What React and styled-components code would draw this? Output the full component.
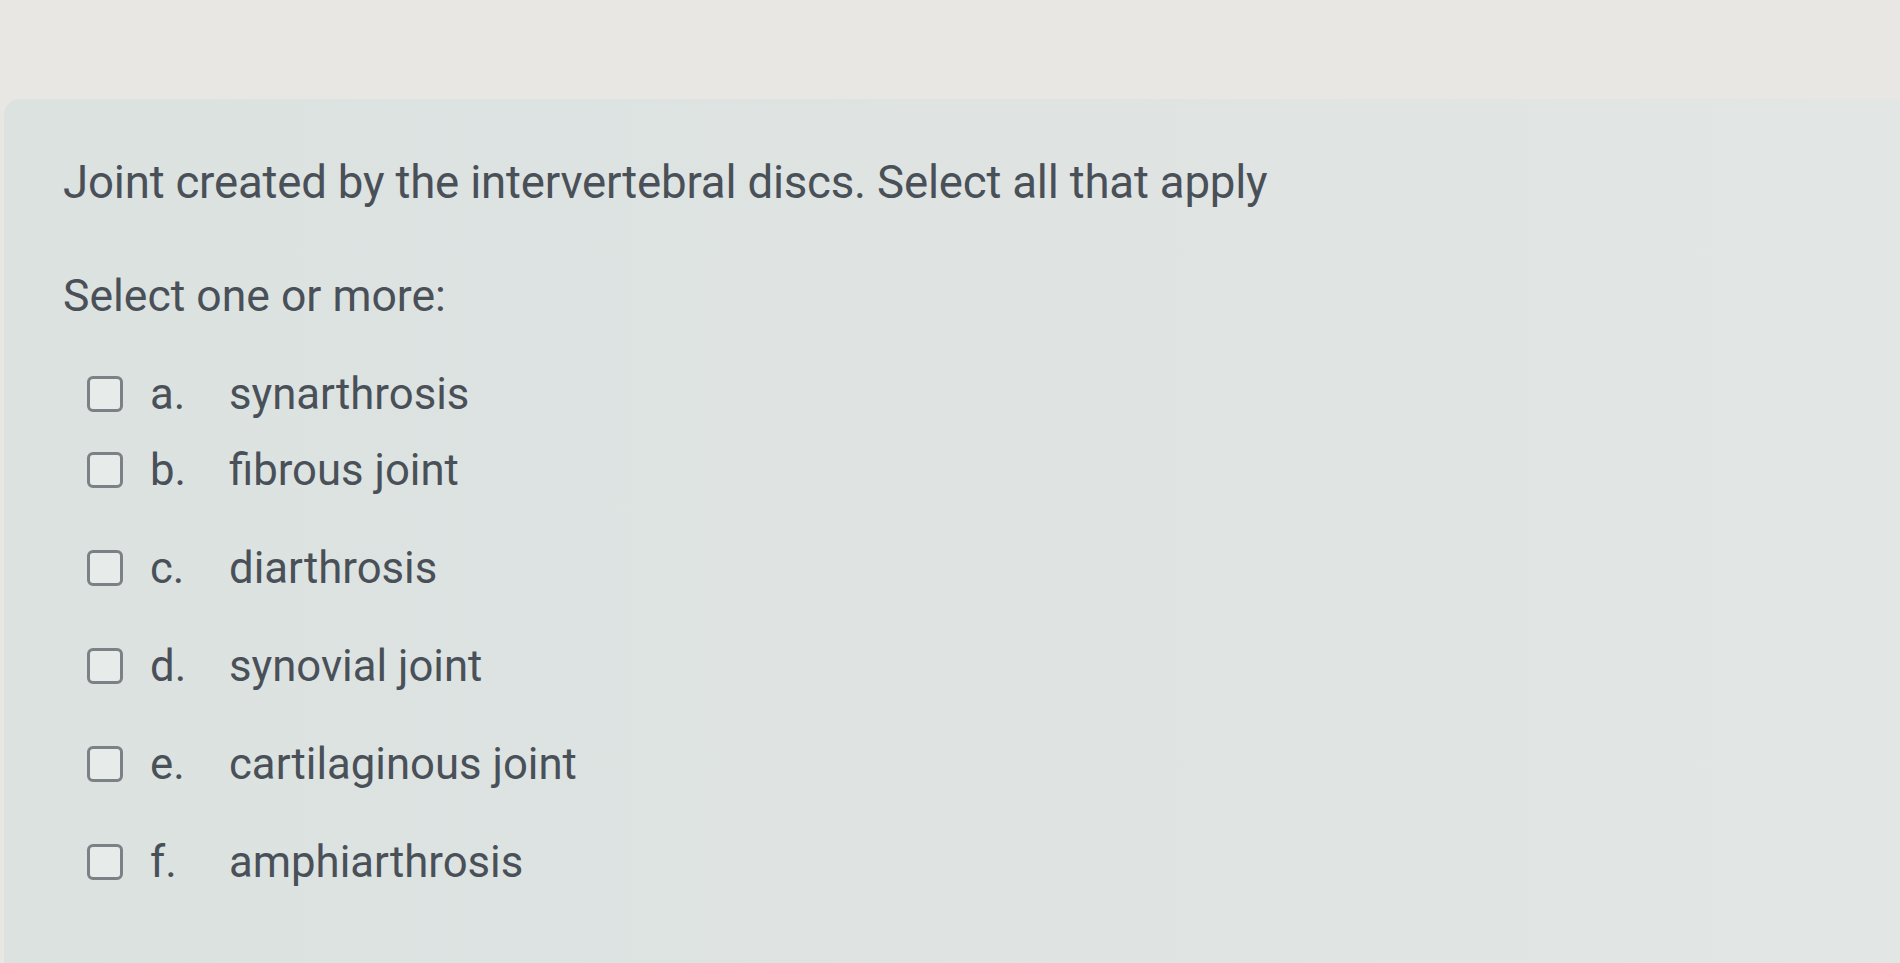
import React from 'react';
import styled, { createGlobalStyle } from 'styled-components';

const GlobalStyle = createGlobalStyle`
  html, body {
    margin: 0;
    padding: 0;
    background: #e9e7e4;
    font-family: Roboto, "Liberation Sans", Arial, sans-serif;
    color: #4a5058;
  }
`;

const Page = styled.div`
  height: 963px;
  overflow: hidden;
  padding-top: 99px;
  padding-left: 4px;
  box-sizing: border-box;
`;

const Panel = styled.div`
  height: 100%;
  border-radius: 16px 0 0 0;
  background: linear-gradient(90deg, #dbe2e0 0%, #dfe4e3 55%, #e2e6e5 100%);
  padding: 56px 0 0 59px;
  box-sizing: border-box;
`;

const QuestionText = styled.div`
  font-size: 45.6px;
  line-height: 56px;
  letter-spacing: -0.2px;
`;

const Prompt = styled.div`
  margin-top: 57px;
  font-size: 44.5px;
  line-height: 56px;
`;

const Answers = styled.div`
  display: flex;
  flex-direction: column;
  margin-top: 42px;
  padding-left: 24px;
`;

const Row = styled.label`
  display: flex;
  align-items: center;
  height: 56px;
  margin-top: ${p => (p.$first ? 0 : p.$tight ? 20 : 42)}px;
  font-size: 43.7px;
`;

const Box = styled.span`
  width: 30px;
  height: 30px;
  border: 3px solid #7c8186;
  border-radius: 6px;
  background: #e7ebe9;
  flex-shrink: 0;
`;

const Letter = styled.span`
  width: 79px;
  margin-left: 27px;
`;

const Answer = styled.span``;

const options = [
  { letter: 'a.', text: 'synarthrosis' },
  { letter: 'b.', text: 'fibrous joint', tight: true },
  { letter: 'c.', text: 'diarthrosis' },
  { letter: 'd.', text: 'synovial joint' },
  { letter: 'e.', text: 'cartilaginous joint' },
  { letter: 'f.', text: 'amphiarthrosis' },
];

const App = () => {
  return (
    <Page>
      <GlobalStyle />
      <Panel>
        <QuestionText>Joint created by the intervertebral discs. Select all that apply</QuestionText>
        <Prompt>Select one or more:</Prompt>
        <Answers>
          {options.map((o, i) => (
            <Row key={o.letter} $first={i === 0} $tight={o.tight}>
              <Box />
              <Letter>{o.letter}</Letter>
              <Answer>{o.text}</Answer>
            </Row>
          ))}
        </Answers>
      </Panel>
    </Page>
  );
};

export default App;
